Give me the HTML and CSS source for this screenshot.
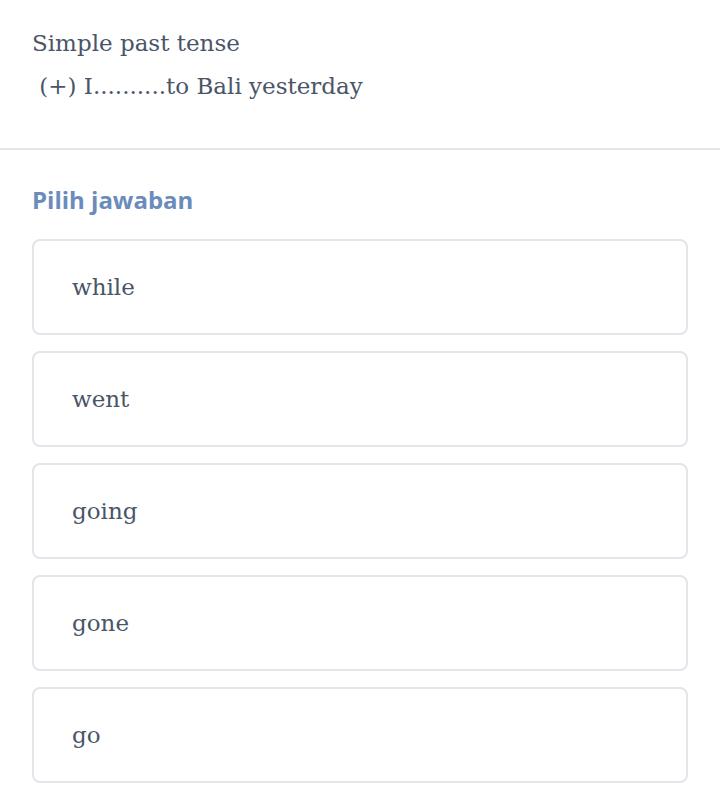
FILE: index.html
```html
<!DOCTYPE html>
<html lang="id">
<head>
  <meta charset="UTF-8">
  <meta name="viewport" content="width=device-width, initial-scale=1.0">
  <title>Soal</title>
  <link rel="stylesheet" href="styles.css">
</head>
<body>

  <!-- Question -->
  <section class="question">
    <p>Simple past tense</p>
    <p>&nbsp;(+) I..........to Bali yesterday</p>
  </section>

  <!-- Answers -->
  <section class="answers">
    <h3>Pilih jawaban</h3>
    <div class="options">
      <button class="option">while</button>
      <button class="option">went</button>
      <button class="option">going</button>
      <button class="option">gone</button>
      <button class="option">go</button>
    </div>
  </section>

</body>
</html>
```
FILE: styles.css
```css
:root {
  --color-text: #4a5568;
  --color-accent: #6b8cba;
  --color-border: #e2e5ea;
  --color-white: #fff;
  --radius: 8px;
}

*, *::before, *::after {
  margin: 0; padding: 0; box-sizing: border-box;
}
body {
  font-family: "DejaVu Serif", "Liberation Serif", serif;
  color: var(--color-text);
  background: var(--color-white);
}

.question {
  padding: 22px 32px 40px;
  border-bottom: 2px solid var(--color-border);
  font-size: 23px;
  line-height: 43px;
}

.answers {
  padding: 32px 32px 0;
}
.answers h3 {
  font-family: "Open Sans", sans-serif;
  font-size: 24px;
  font-weight: 700;
  color: var(--color-accent);
  line-height: 36px;
  margin-bottom: 21px;
}
.options {
  display: flex;
  flex-direction: column;
  gap: 16px;
}
.option {
  display: block;
  width: 100%;
  height: 96px;
  text-align: left;
  padding: 0 38px;
  font-family: inherit;
  font-size: 23px;
  color: var(--color-text);
  background: var(--color-white);
  border: 2px solid var(--color-border);
  border-radius: var(--radius);
  cursor: pointer;
}
```
